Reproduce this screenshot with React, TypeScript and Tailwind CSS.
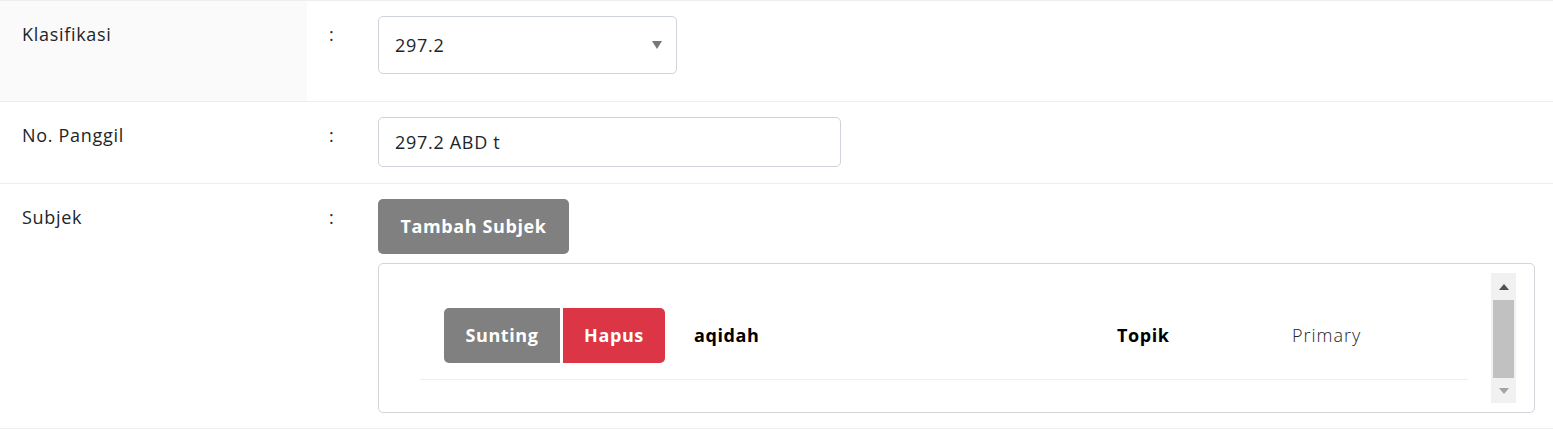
import React from "react";

const font = "font-['Open_Sans','Noto_Sans',sans-serif]";

function Label({ children, bg }: { children: React.ReactNode; bg?: boolean }) {
  return (
    <div className={`w-[307px] shrink-0 pl-[22px] pt-[20px] leading-[27px] ${bg ? "bg-[#fafafa]" : ""}`}>
      {children}
    </div>
  );
}

function Colon() {
  return <div className="w-[71px] shrink-0 pl-[22px] pt-[20px] leading-[27px]">:</div>;
}

export default function App() {
  return (
    <div className={`w-[1553px] min-h-[431px] bg-white text-[18px] tracking-[0.7px] text-[#212529] ${font}`}>
      {/* Row 1 */}
      <div className="flex border-t border-[#eeeeee] h-[101px]">
        <Label bg>Klasifikasi</Label>
        <Colon />
        <div className="pt-[15px]">
          <div className="flex h-[58px] w-[299px] items-center justify-between rounded-[5px] border border-[#ced4da] pl-[16px] pr-[14px]">
            <span>297.2</span>
            <svg width="10" height="8" viewBox="0 0 10 8" className="mb-[1px]">
              <polygon points="0,0 10,0 5,8" fill="#777777" />
            </svg>
          </div>
        </div>
      </div>

      {/* Row 2 */}
      <div className="flex border-t border-[#eeeeee] h-[82px]">
        <Label>No. Panggil</Label>
        <Colon />
        <div className="pt-[15px]">
          <div className="flex h-[50px] w-[463px] items-center rounded-[5px] border border-[#ced4da] pl-[16px]">
            297.2 ABD t
          </div>
        </div>
      </div>

      {/* Row 3 */}
      <div className="flex border-y border-[#eeeeee] h-[246px]">
        <Label>Subjek</Label>
        <Colon />
        <div className="pt-[15px] flex flex-col">
          <button className="h-[55px] w-[191px] rounded-[5px] bg-[#808080] font-bold tracking-[0.6px] text-white">
            Tambah Subjek
          </button>
          <div className="mt-[9px] flex h-[150px] w-[1157px] rounded-[5px] border border-[#d2d5d9] pt-[9px] pb-[8px] pl-[9px] pr-[18px]">
            <div className="flex-1 overflow-hidden">
              <div className="ml-[32px] mr-[23px] mt-[35px] flex items-center border-b border-[#eeeeee] pb-[16px]">
                <div className="flex w-[274px] shrink-0 pl-[24px]">
                  <button className="h-[55px] w-[116px] rounded-l-[5px] bg-[#808080] font-bold tracking-[0.6px] text-white">
                    Sunting
                  </button>
                  <button className="ml-[3px] h-[55px] w-[102px] rounded-r-[5px] bg-[#dc3545] font-bold tracking-[0.6px] text-white">
                    Hapus
                  </button>
                </div>
                <div className="w-[423px] shrink-0 font-bold tracking-[0.6px] text-black">aqidah</div>
                <div className="w-[175px] shrink-0 font-bold tracking-[0.6px] text-black">Topik</div>
                <div className="font-light tracking-[1px] text-[#212529]">Primary</div>
              </div>
            </div>
            <div className="relative flex h-[130px] w-[25px] shrink-0 flex-col bg-[#f1f1f1]">
              <div className="flex h-[27px] items-center justify-center">
                <svg width="10" height="6" viewBox="0 0 10 6">
                  <polygon points="0,6 10,6 5,0" fill="#505050" />
                </svg>
              </div>
              <div className="ml-[2px] mr-[2px] h-[78px] bg-[#c1c1c1]" />
              <div className="flex flex-1 items-center justify-center">
                <svg width="10" height="6" viewBox="0 0 10 6">
                  <polygon points="0,0 10,0 5,6" fill="#a3a3a3" />
                </svg>
              </div>
            </div>
          </div>
        </div>
      </div>
    </div>
  );
}
